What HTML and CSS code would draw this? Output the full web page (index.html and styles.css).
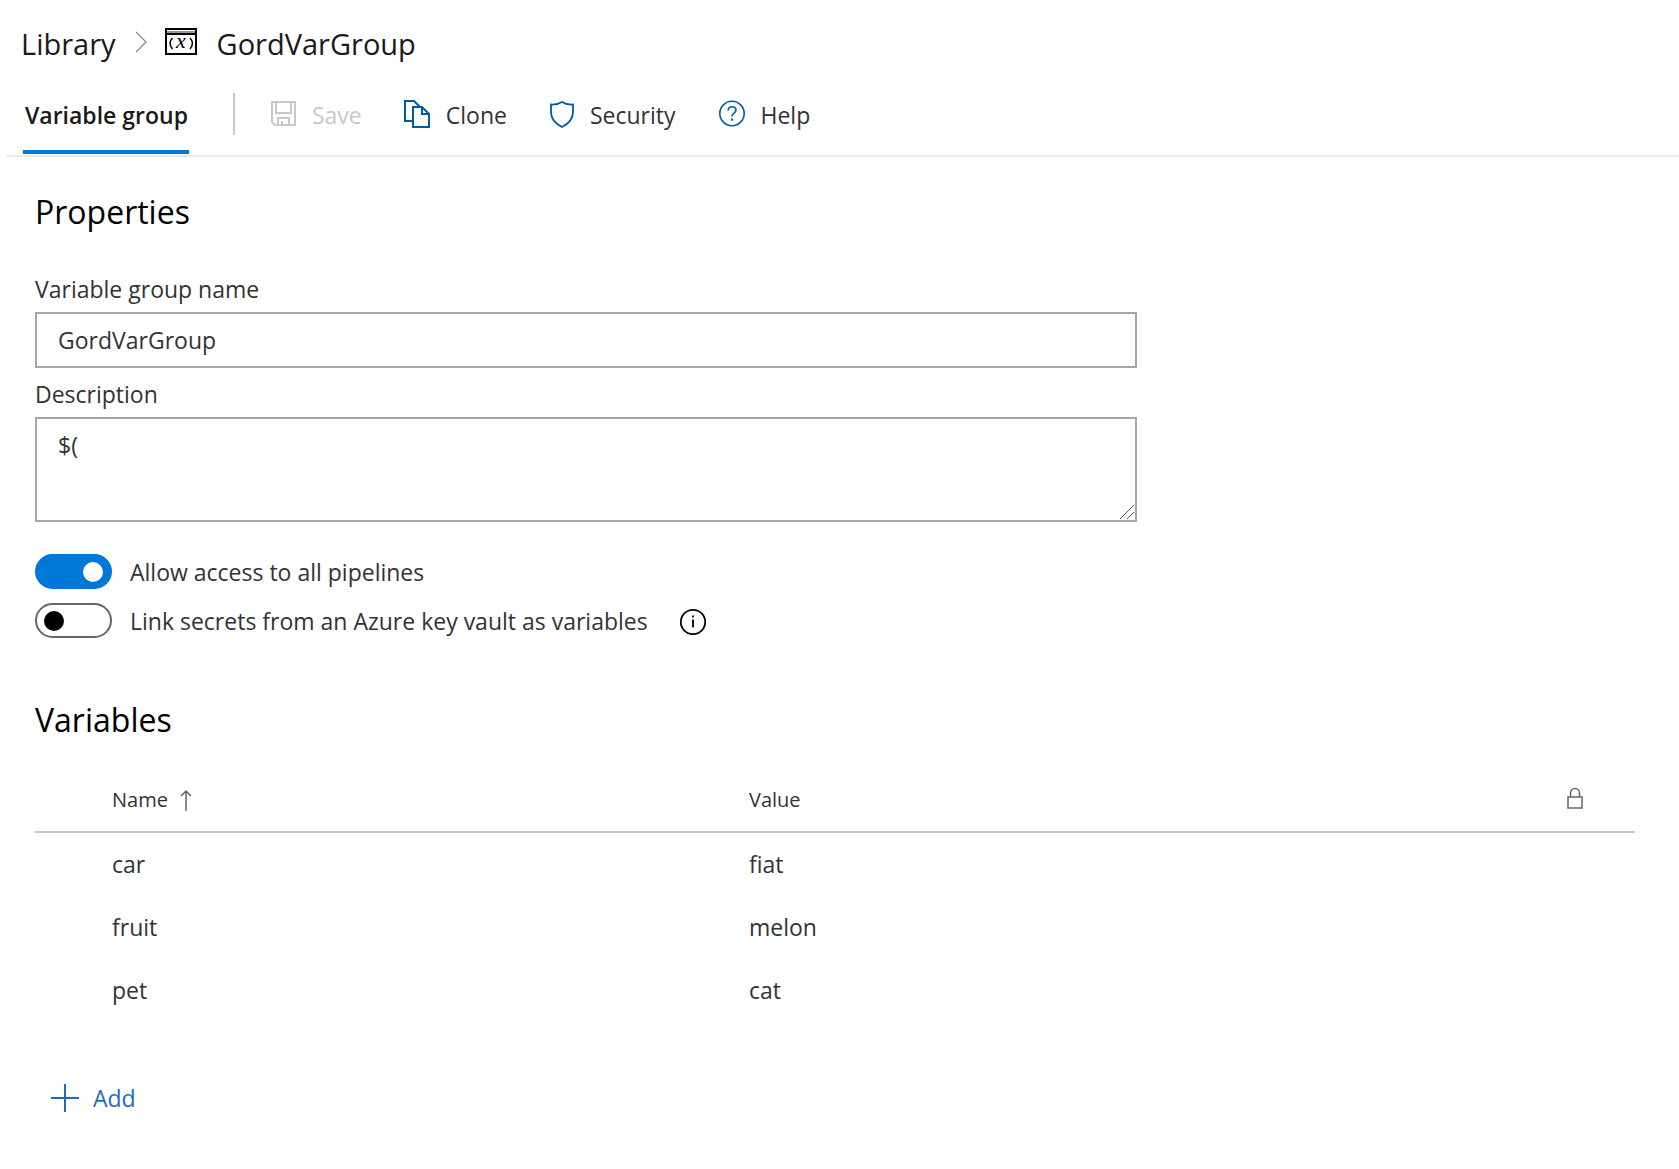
FILE: index.html
```html
<!DOCTYPE html>
<html lang="en">
<head>
<meta charset="utf-8">
<meta name="viewport" content="width=device-width, initial-scale=1">
<title>GordVarGroup - Library</title>
<link rel="stylesheet" href="styles.css">
</head>
<body>
<header class="header">
  <nav class="breadcrumb" aria-label="Breadcrumb">
    <a class="breadcrumb-link" href="#library">Library</a>
    <svg class="breadcrumb-chevron" width="12" height="22" viewBox="0 0 12 22" aria-hidden="true"><path d="M1 1l10 10L1 21" fill="none" stroke="#8a8a8a" stroke-width="1.3"/></svg>
    <svg class="breadcrumb-icon" width="33" height="28" viewBox="0 0 33 28" aria-hidden="true">
      <path d="M1 1h30v25H1zM1 6h30" fill="none" stroke="#000" stroke-width="2"/>
      <path d="M2 4h28" stroke="#999" stroke-width="2"/>
      <path d="M7.500 10q-5 5 0 11M25 10q5 5 0 11" fill="none" stroke="#000" stroke-width="1.500"/>
      <text class="breadcrumb-glyph" x="16" y="20" text-anchor="middle">x</text>
    </svg>
    <h1 class="breadcrumb-title">GordVarGroup</h1>
  </nav>
  <div class="toolbar">
    <a class="tab" href="#variable-group" aria-current="page">Variable group</a>
    <span class="divider"></span>
    <button class="command" type="button" disabled>
      <svg width="26" height="26" viewBox="0 0 26 26" fill="none" stroke="currentColor" stroke-width="2" aria-hidden="true"><path d="M1 1h23v23H4l-3-3zM5 1v11h15V1M7 24v-7h11v7M11 24v-4"/></svg>
      <span>Save</span>
    </button>
    <button class="command" type="button">
      <svg width="27" height="28" viewBox="0 0 27 28" fill="none" stroke="currentColor" stroke-width="2" aria-hidden="true"><path d="M9 21H1V1h9l6 6M9 7h9l7 7v13H9zM18 7v7h7"/></svg>
      <span>Clone</span>
    </button>
    <button class="command" type="button">
      <svg width="26" height="28" viewBox="0 0 26 28" fill="none" stroke="currentColor" stroke-width="1.800" aria-hidden="true"><path d="M13 2c3 2 7 2.700 11 2.500V12c0 7-4 11.500-11 15C6 23.500 2 19 2 12V4.500C6 4.700 10 4 13 2z"/></svg>
      <span>Security</span>
    </button>
    <button class="command" type="button">
      <svg width="28" height="28" viewBox="0 0 28 28" fill="none" stroke="currentColor" stroke-width="1.600" aria-hidden="true"><circle cx="14" cy="13.500" r="12.200"/><path d="M10.200 10.500c0-5 7.800-5 7.800-.5 0 3.200-4 3.200-4 6.500"/><path d="M14 18.500v2.200" stroke-width="2"/></svg>
      <span>Help</span>
    </button>
  </div>
</header>
<main class="content">
  <section class="section">
    <h2 class="heading">Properties</h2>
    <div class="form">
      <label class="label" for="group-name">Variable group name</label>
      <input class="field" id="group-name" type="text" value="GordVarGroup">
      <label class="label" for="description">Description</label>
      <textarea class="field field-multiline" id="description">$(</textarea>
    </div>
    <div class="toggles">
      <div class="toggle-row">
        <input class="toggle" id="allow" type="checkbox" role="switch" checked>
        <label for="allow">Allow access to all pipelines</label>
      </div>
      <div class="toggle-row">
        <input class="toggle" id="link" type="checkbox" role="switch">
        <label for="link">Link secrets from an Azure key vault as variables</label>
        <button class="info" type="button" aria-label="More information">
          <svg width="28" height="28" viewBox="0 0 28 28" fill="none" stroke="currentColor" aria-hidden="true"><circle cx="14" cy="15" r="12.200" stroke-width="1.800"/><path d="M14 12.500v8M14 8.500v2" stroke-width="1.800"/></svg>
        </button>
      </div>
    </div>
  </section>
  <section class="section">
    <h2 class="heading">Variables</h2>
    <table class="variables">
      <thead>
        <tr>
          <th class="col-name" scope="col"><span class="sortable">Name <svg width="12" height="22" viewBox="0 0 12 22" fill="none" stroke="#666" stroke-width="1.500" aria-hidden="true"><path d="M6 22V2M1 7l5-5 5 5"/></svg></span></th>
          <th class="col-value" scope="col">Value</th>
          <th class="col-lock" scope="col" aria-label="Secret"><svg width="16" height="22" viewBox="0 0 16 22" fill="none" stroke="#666" stroke-width="1.500" aria-hidden="true"><path d="M1 10h14v11H1zM3.500 10V6a4.500 4.500 0 0 1 9 0v4"/></svg></th>
        </tr>
      </thead>
      <tbody>
        <tr><td>car</td><td>fiat</td><td></td></tr>
        <tr><td>fruit</td><td>melon</td><td></td></tr>
        <tr><td>pet</td><td>cat</td><td></td></tr>
      </tbody>
    </table>
    <button class="add" type="button">
      <svg width="28" height="28" viewBox="0 0 28 28" fill="none" stroke="currentColor" stroke-width="2" aria-hidden="true"><path d="M14 0v28M0 14h28"/></svg>
      <span>Add</span>
    </button>
  </section>
</main>
</body>
</html>
```

FILE: styles.css
```css
* {
  box-sizing: border-box;
}

body {
  margin: 0;
  background: #fff;
  color: #333;
  font-family: "Segoe UI", "Open Sans", "Noto Sans", sans-serif;
  font-size: 23px;
  line-height: 32px;
}

button,
input,
textarea {
  font: inherit;
  color: inherit;
}

button {
  display: flex;
  align-items: center;
  padding: 0;
  border: 0;
  background: none;
}

svg {
  flex: none;
}

.header {
  margin-left: 7px;
  border-bottom: 2px solid #eaeaea;
}

.breadcrumb {
  display: flex;
  align-items: center;
  height: 84px;
  padding-left: 14px;
  color: #1a1a1a;
  font-size: 29px;
}

.breadcrumb-link,
.breadcrumb-title {
  padding-top: 4px;
}

.breadcrumb-link {
  color: inherit;
  text-decoration: none;
}

.breadcrumb-chevron {
  margin: 0 18px 0 19px;
}

.breadcrumb-icon {
  margin-right: 19px;
}

.breadcrumb-glyph {
  font-family: "Liberation Serif", serif;
  font-size: 22px;
  font-style: italic;
}

.breadcrumb-title {
  margin: 0;
  font-size: inherit;
  font-weight: 400;
}

.toolbar {
  display: flex;
  height: 71px;
  padding-left: 16px;
}

.tab {
  margin-bottom: 1px;
  padding: 15px 1px 0 2px;
  border-bottom: 4px solid #0078d7;
  color: #1a1a1a;
  font-weight: 600;
  text-decoration: none;
}

.divider {
  width: 2px;
  height: 42px;
  margin: 9px 36px 0 44px;
  background: #c8c8c8;
}

.command {
  height: 32px;
  margin: 15px 42px 0 0;
  gap: 15px;
}

.command svg {
  margin-bottom: 2px;
  color: #005a9e;
}

.command:disabled,
.command:disabled svg {
  color: #c8c8c8;
}

.content {
  padding: 35px 44px 40px 35px;
}

.heading {
  margin: 0;
  color: #000;
  font-size: 32px;
  font-weight: 400;
  line-height: 40px;
}

.form {
  display: flex;
  flex-direction: column;
  max-width: 1102px;
  margin-top: 41px;
}

.label {
  padding-bottom: 7px;
}

.field {
  width: 100%;
  height: 56px;
  margin: 0 0 10px;
  padding: 0 21px;
  border: 2px solid #a6a6a6;
  border-radius: 0;
  background: #fff;
}

.field-multiline {
  height: 105px;
  padding-top: 10px;
  resize: vertical;
}

.field-multiline::-webkit-resizer {
  background: url("data:image/svg+xml,%3Csvg xmlns='http://www.w3.org/2000/svg' width='15' height='15'%3E%3Cpath d='M0 14L14 0M7 14l7-7' stroke='%23555'/%3E%3C/svg%3E") no-repeat;
}

.toggles {
  display: grid;
  gap: 14px;
  margin-top: 22px;
}

.toggle-row {
  display: flex;
  align-items: center;
  height: 35px;
}

.toggle {
  flex: none;
  display: flex;
  align-items: center;
  appearance: none;
  width: 77px;
  height: 35px;
  margin: 0 18px 0 0;
  padding: 0 7px;
  border: 2px solid #666;
  border-radius: 18px;
}

.toggle::before {
  content: "";
  width: 20px;
  height: 20px;
  border-radius: 50%;
  background: #000;
}

.toggle:checked {
  justify-content: flex-end;
  border-color: #0078d7;
  background: #0078d7;
}

.toggle:checked::before {
  background: #fff;
}

.info {
  margin-left: 31px;
  color: #000;
}

.section + .section {
  margin-top: 62px;
}

.variables {
  width: 100%;
  margin-top: 26px;
  border-collapse: collapse;
  table-layout: fixed;
}

.variables th {
  height: 66px;
  padding: 2px 0 0;
  border-bottom: 2px solid #c8c8c8;
  font-size: 20px;
  font-weight: 400;
  text-align: left;
}

.variables td {
  height: 63px;
  padding: 0;
}

.variables th:first-child,
.variables td:first-child {
  padding-left: 77px;
}

.variables .col-name {
  width: 714px;
}

.variables .col-lock {
  width: 68px;
  padding: 0 0 2px;
}

.col-lock svg {
  display: block;
}

.sortable {
  display: flex;
  align-items: center;
  gap: 12px;
}

.add {
  margin: 61px 0 0 16px;
  gap: 14px;
  color: #1f6cbf;
}
```
